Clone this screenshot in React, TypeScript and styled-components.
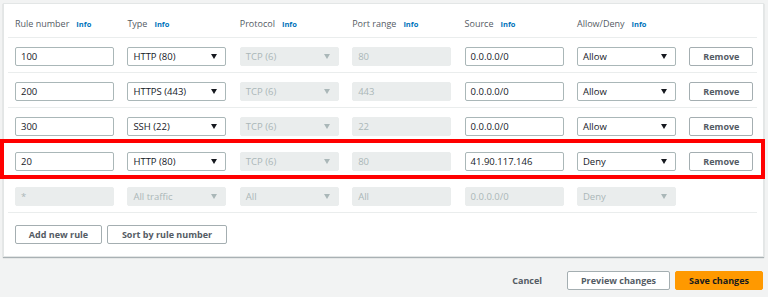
import * as React from 'react';
import styled, { createGlobalStyle } from 'styled-components';

const GlobalStyle = createGlobalStyle`
  html, body {
    margin: 0;
    padding: 0;
    background: #f2f3f3;
    font-family: 'Open Sans', 'Liberation Sans', sans-serif;
  }
`

const Page = styled.div`
  width: 768px;
  height: 297px;
  padding: 3px 4px 0 3px;
  box-sizing: border-box;
  overflow: hidden;
`

const Card = styled.div`
  background: #ffffff;
  border: 1px solid #e3e6e6;
  box-shadow: 0 1px 1px rgba(0, 28, 36, 0.3);
  position: relative;
`

const Grid = styled.div`
  display: grid;
  grid-template-columns: repeat(6, 99px) 64px;
  column-gap: 13.4px;
  margin: 0 6px 0 4px;
  padding-left: 7px;
  border-bottom: 1px solid #eaeded;
  box-sizing: border-box;
`

const HeadRow = styled(Grid)`
  height: 34px;
  align-items: end;
  padding-bottom: 7px;
`

const Row = styled(Grid)`
  height: 35px;
  align-items: center;
  padding-top: 2px;
  position: relative;
`

const Highlight = styled.div`
  position: absolute;
  left: -8px;
  right: -8px;
  top: -4px;
  bottom: -2px;
  border: 4px solid #ff0000;
  pointer-events: none;
`

const HeadCell = styled.div`
  display: flex;
  align-items: center;
  gap: 7px;
  font-size: 9px;
  line-height: 12px;
  color: #545b64;
  white-space: nowrap;
`

const Info = styled.span`
  font-size: 7.5px;
  font-weight: 700;
  color: #0073bb;
`

const Field = styled.div<{ $disabled?: boolean }>`
  height: 19px;
  box-sizing: border-box;
  border: 1px solid ${p => (p.$disabled ? '#eaeded' : '#aab7b8')};
  background: ${p => (p.$disabled ? '#eaeded' : '#ffffff')};
  color: ${p => (p.$disabled ? '#aab7b8' : '#16191f')};
  border-radius: 2px;
  padding: 0 5px;
  font-size: 9.5px;
  display: flex;
  align-items: center;
  justify-content: space-between;
  white-space: nowrap;
`

const Caret = styled.span<{ $disabled?: boolean }>`
  width: 0;
  height: 0;
  border-left: 3.5px solid transparent;
  border-right: 3.5px solid transparent;
  border-top: 5px solid ${p => (p.$disabled ? '#aab7b8' : '#16191f')};
  margin-right: 3px;
`

const Button = styled.button<{ $primary?: boolean; $w?: number }>`
  height: 19px;
  width: ${p => (p.$w ? `${p.$w}px` : 'auto')};
  box-sizing: border-box;
  padding: 0;
  border: 1px solid ${p => (p.$primary ? '#ff9900' : '#a4aeb1')};
  background: ${p => (p.$primary ? '#ff9900' : '#ffffff')};
  color: ${p => (p.$primary ? '#16191f' : '#545b64')};
  border-radius: 2px;
  font-family: 'Open Sans', 'Liberation Sans', sans-serif;
  font-size: 9px;
  font-weight: 700;
  cursor: pointer;
`

const LinkButton = styled.button`
  background: transparent;
  border: none;
  padding: 0;
  margin-right: 20px;
  font-family: 'Open Sans', 'Liberation Sans', sans-serif;
  font-size: 9px;
  font-weight: 700;
  color: #545b64;
  cursor: pointer;
`

const Actions = styled.div`
  display: flex;
  gap: 5px;
  padding: 12px 0 12px 11px;
`

const Footer = styled.div`
  display: flex;
  justify-content: flex-end;
  align-items: center;
  gap: 5px;
  margin-top: 14px;
  padding-right: 1px;
`

type Rule = {
  num: string;
  type: string;
  protocol: string;
  port: string;
  source: string;
  action: string;
  mark?: boolean;
};

const rules: Rule[] = [
  { num: '100', type: 'HTTP (80)', protocol: 'TCP (6)', port: '80', source: '0.0.0.0/0', action: 'Allow' },
  { num: '200', type: 'HTTPS (443)', protocol: 'TCP (6)', port: '443', source: '0.0.0.0/0', action: 'Allow' },
  { num: '300', type: 'SSH (22)', protocol: 'TCP (6)', port: '22', source: '0.0.0.0/0', action: 'Allow' },
  { num: '20', type: 'HTTP (80)', protocol: 'TCP (6)', port: '80', source: '41.90.117.146', action: 'Deny', mark: true },
];

const heads = ['Rule number', 'Type', 'Protocol', 'Port range', 'Source', 'Allow/Deny'];

function Select({ value, disabled }: { value: string; disabled?: boolean }) {
  return (
    <Field $disabled={disabled}>
      <span>{value}</span>
      <Caret $disabled={disabled} />
    </Field>
  );
}

export default function App() {
  return (
    <Page>
      <GlobalStyle />
      <Card>
        <HeadRow>
          {heads.map(h => (
            <HeadCell key={h}>
              {h}
              <Info>Info</Info>
            </HeadCell>
          ))}
          <div />
        </HeadRow>
        {rules.map(r => (
          <Row key={r.num}>
            <Field>{r.num}</Field>
            <Select value={r.type} />
            <Select value={r.protocol} disabled />
            <Field $disabled>{r.port}</Field>
            <Field>{r.source}</Field>
            <Select value={r.action} />
            <Button>Remove</Button>
            {r.mark && <Highlight />}
          </Row>
        ))}
        <Row>
          <Field $disabled>*</Field>
          <Select value="All traffic" disabled />
          <Select value="All" disabled />
          <Field $disabled>All</Field>
          <Field $disabled>0.0.0.0/0</Field>
          <Select value="Deny" disabled />
          <div />
        </Row>
        <Actions>
          <Button $w={87}>Add new rule</Button>
          <Button $w={120}>Sort by rule number</Button>
        </Actions>
      </Card>
      <Footer>
        <LinkButton>Cancel</LinkButton>
        <Button $w={103}>Preview changes</Button>
        <Button $primary $w={88}>Save changes</Button>
      </Footer>
    </Page>
  );
}
